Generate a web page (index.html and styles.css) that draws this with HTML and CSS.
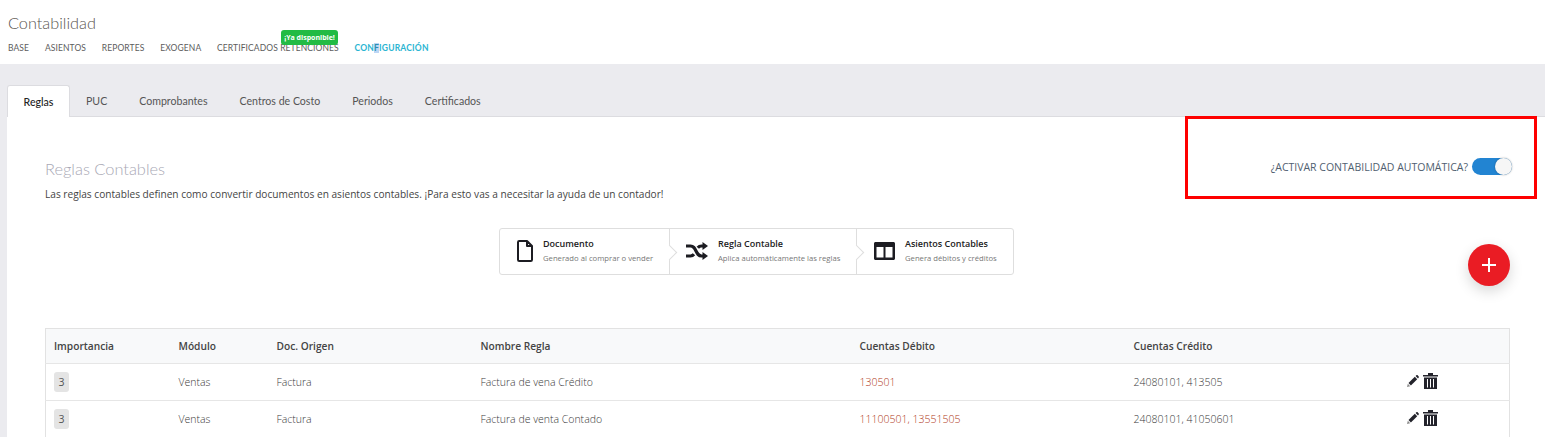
FILE: index.html
```html
<!DOCTYPE html>
<html lang="es">
<head>
<meta charset="utf-8">
<title>Contabilidad</title>
<link rel="stylesheet" href="styles.css">
</head>
<body>
<header class="top">
  <h1 class="app-title">Contabilidad</h1>
  <nav class="main-nav">
    <a>BASE</a>
    <a>ASIENTOS</a>
    <a>REPORTES</a>
    <a>EXOGENA</a>
    <a class="with-badge">CERTIFICADOS RETENCIONES<span class="badge">¡Ya disponible!</span></a>
    <a class="active">CON<span class="sel">F</span>IGURACIÓN</a>
  </nav>
</header>
<main class="band">
  <ul class="tabs">
    <li class="tab current">Reglas</li>
    <li class="tab">PUC</li>
    <li class="tab">Comprobantes</li>
    <li class="tab">Centros de Costo</li>
    <li class="tab">Periodos</li>
    <li class="tab">Certificados</li>
  </ul>
  <section class="panel">
    <div class="intro">
      <div class="intro-text">
        <h2 class="section-title">Reglas Contables</h2>
        <p class="section-sub">Las reglas contables definen como convertir documentos en asientos contables. ¡Para esto vas a necesitar la ayuda de un contador!</p>
      </div>
      <div class="auto-box">
        <span class="auto-label">¿ACTIVAR CONTABILIDAD AUTOMÁTICA?</span>
        <span class="switch"><span class="knob"></span></span>
      </div>
    </div>
    <div class="steps-row">
      <div class="steps">
        <div class="step step-1">
          <svg class="step-icon" width="16" height="22" viewBox="0 0 16 22"><path d="M1 2.200C1 1.500 1.500 1 2.200 1H10L15 6V19.800C15 20.500 14.500 21 13.800 21H2.200C1.500 21 1 20.500 1 19.800Z M10 1V6H15" fill="none" stroke="#1c1c22" stroke-width="2" stroke-linejoin="round"/></svg>
          <div><div class="step-name">Documento</div><div class="step-desc">Generado al comprar o vender</div></div>
        </div>
        <div class="step step-2">
          <svg class="step-icon" width="22" height="18" viewBox="0 0 22 18"><path d="M0 4H4.500C7.500 4 8.500 6 10 9C11.500 12 12.500 14 15.500 14H19M0 14H4.500C6 14 7 13.500 8 12.300M11.800 5.700C12.800 4.500 14 4 15.500 4H19" fill="none" stroke="#1c1c22" stroke-width="3.200"/><path d="M16.500 0L22 4L16.500 8Z M16.500 10L22 14L16.500 18Z" fill="#1c1c22"/></svg>
          <div><div class="step-name">Regla Contable</div><div class="step-desc">Aplica automáticamente las reglas</div></div>
        </div>
        <div class="step step-3">
          <svg class="step-icon" width="21" height="18" viewBox="0 0 21 18"><path d="M1.500 0H19.500C20.300 0 21 .7 21 1.500V16.500C21 17.300 20.300 18 19.500 18H1.500C.7 18 0 17.300 0 16.500V1.500C0 .7.7 0 1.500 0ZM2.500 5V15.500H9.500V5ZM11.500 5V15.500H18.500V5Z" fill="#1c1c22" fill-rule="evenodd"/></svg>
          <div><div class="step-name">Asientos Contables</div><div class="step-desc">Genera débitos y créditos</div></div>
        </div>
      </div>
      <button class="fab" aria-label="Agregar"><svg width="16" height="16" viewBox="0 0 16 16"><path d="M8 1V15M1 8H15" stroke="#fff" stroke-width="2"/></svg></button>
    </div>
    <table class="rules">
      <thead>
        <tr><th class="c-imp">Importancia</th><th class="c-mod">Módulo</th><th class="c-doc">Doc. Origen</th><th class="c-name">Nombre Regla</th><th class="c-deb">Cuentas Débito</th><th class="c-cre">Cuentas Crédito</th><th></th></tr>
      </thead>
      <tbody>
        <tr>
          <td><span class="rank">3</span></td><td>Ventas</td><td>Factura</td><td>Factura de vena Crédito</td><td class="debit">130501</td><td>24080101, 413505</td>
          <td class="actions"><svg class="pencil" width="12" height="12" viewBox="0 0 12 12"><path d="M0 12L.8 8.800L3.200 11.200Z" fill="#8a8a8a"/><path d="M1.500 8.100L7.800 1.800L10.200 4.200L3.900 10.500Z" fill="#23232b"/><path d="M8.600 1L9.400 .3C9.800 0 10.200 0 10.600 .3L11.700 1.400C12 1.800 12 2.200 11.700 2.600L11 3.400Z" fill="#23232b"/></svg><svg class="trash" width="15" height="16" viewBox="0 0 15 16"><path d="M0 2H5V0H10V2H15V3.500H0Z M1 4.500H14V16H1Z" fill="#23232b"/><path d="M4.500 6V14.500M7.500 6V14.500M10.500 6V14.500" stroke="#fff" stroke-width="1"/></svg></td>
        </tr>
        <tr>
          <td><span class="rank">3</span></td><td>Ventas</td><td>Factura</td><td>Factura de venta Contado</td><td class="debit">11100501, 13551505</td><td>24080101, 41050601</td>
          <td class="actions"><svg class="pencil" width="12" height="12" viewBox="0 0 12 12"><path d="M0 12L.8 8.800L3.200 11.200Z" fill="#8a8a8a"/><path d="M1.500 8.100L7.800 1.800L10.200 4.200L3.900 10.500Z" fill="#23232b"/><path d="M8.600 1L9.400 .3C9.800 0 10.200 0 10.600 .3L11.700 1.400C12 1.800 12 2.200 11.700 2.600L11 3.400Z" fill="#23232b"/></svg><svg class="trash" width="15" height="16" viewBox="0 0 15 16"><path d="M0 2H5V0H10V2H15V3.500H0Z M1 4.500H14V16H1Z" fill="#23232b"/><path d="M4.500 6V14.500M7.500 6V14.500M10.500 6V14.500" stroke="#fff" stroke-width="1"/></svg></td>
        </tr>
      </tbody>
    </table>
    <div class="highlight"></div>
  </section>
</main>
</body>
</html>
```
FILE: styles.css
```css
* { box-sizing: border-box; }
html, body { margin: 0; height: 437px; overflow: hidden; background: #fff; }
body { font-family: "Open Sans", sans-serif; color: #333; }
.top { height: 64px; padding: 13px 8px 0; }
.app-title { margin: 0; font: 300 16.300px/20px Lato, sans-serif; color: #5a5550; }
.main-nav { display: flex; gap: 15.800px; margin-top: 8px; font: 400 8.500px/14px Lato, sans-serif; color: #5c5c5c; letter-spacing: .1px; }
.main-nav a { white-space: nowrap; }
.with-badge { position: relative; }
.badge { position: absolute; left: 64px; top: -11px; width: 57px; height: 15px; background: #22bb44; color: #fff; border-radius: 3px; font: 700 7px/15px "Open Sans", sans-serif; text-align: center; letter-spacing: 0; }
.active { color: #2bb5d2; font-weight: 700; letter-spacing: .2px; }
.sel { background: #bcd6f5; color: #2b8fb0; }
.band { background: #ebebef; padding: 21px 0 0 7px; }
.tabs { display: flex; list-style: none; margin: 0; padding: 0; height: 32px; border-bottom: 1px solid #dcdce0; font: 400 10.600px/32px Lato, sans-serif; color: #555; }
.tab { padding: 0 16px; }
.tab.current { width: 63px; height: 32px; background: #fff; border: 1px solid #dcdce0; border-bottom: 0; border-radius: 3px 3px 0 0; color: #222; padding: 0; text-align: center; font-weight: 500; }
.panel { position: relative; background: #fff; height: 320px; padding: 0 35px 0 38px; }
.intro { display: flex; justify-content: space-between; height: 111px; padding-top: 41px; }
.section-title { margin: 0; font: 300 16.400px/22px Lato, sans-serif; color: #a9a9b5; }
.section-sub { margin: 7px 0 0; font: 400 10.140px/14px "Open Sans", sans-serif; color: #444; }
.auto-box { display: flex; align-items: center; gap: 4px; height: 17px; margin: 0 -2px 0 0; }
.auto-label { font: 400 10.500px/16px "Open Sans", sans-serif; color: #506070; }
.switch { display: flex; justify-content: flex-end; width: 40px; height: 17px; border-radius: 9px; background: #2284d2; }
.knob { width: 17px; height: 17px; border-radius: 50%; background: #f6f6f6; box-shadow: 0 0 2px rgba(0,0,0,.35); }
.steps-row { position: relative; height: 100px; display: flex; justify-content: flex-start; padding-left: 454px; }
.steps { display: flex; height: 47px; width: 515px; border: 1px solid #dedede; border-radius: 3px; }
.step { display: flex; align-items: center; position: relative; padding-bottom: 1px; }
.step + .step { border-left: 1px solid #dedede; }
.step + .step::before { content: ""; position: absolute; left: -6px; top: 18px; width: 10px; height: 10px; background: #fff; border-top: 1px solid #dedede; border-right: 1px solid #dedede; transform: rotate(45deg); }
.step-1 { width: 169px; padding-left: 17px; gap: 10px; }
.step-2 { width: 187px; padding-left: 16px; gap: 10px; }
.step-3 { flex: 1; padding-left: 17px; gap: 10px; }
.step-icon { flex: none; position: relative; }
.step-name { font: 600 9px/13px "Open Sans", sans-serif; color: #222; }
.step-desc { font: 400 7.700px/13px "Open Sans", sans-serif; color: #777; margin-top: 2px; white-space: nowrap; }
.fab { position: absolute; top: 16px; right: 0; width: 42px; height: 42px; padding: 0; border: 0; border-radius: 50%; background: #ea1c24; box-shadow: 0 5px 14px rgba(0,0,0,.16); display: flex; align-items: center; justify-content: center; }
.rules { width: 1465px; border-collapse: collapse; table-layout: fixed; border: 1px solid #e2e2e2; font: 300 10.500px/14px "Open Sans", sans-serif; color: #3a3a3a; }
.rules th { height: 35px; background: #f8f9fa; text-align: left; font: 600 10.200px/14px "Open Sans", sans-serif; color: #444; padding: 0 0 0 8px; }
.rules td { height: 37px; padding: 0 0 0 8px; border-top: 1px solid #e6e6e6; }
.c-imp { width: 125px; }
.c-mod { width: 98px; }
.c-doc { width: 204px; }
.c-name { width: 379px; }
.c-deb { width: 274px; }
.c-cre { width: 273px; }
.rank { display: inline-block; width: 15px; height: 20px; font-weight: 400; line-height: 20px; text-align: center; background: #e4e4e4; border-radius: 3px; color: #555; }
.debit { color: #b03a22; }
.actions { white-space: nowrap; }
.actions svg { vertical-align: middle; margin-bottom: 2px; }
.pencil { margin-left: 0; margin-right: 4px; }
.highlight { position: absolute; left: 1178px; top: -1px; width: 352px; height: 83px; border: 3px solid #fe0000; pointer-events: none; }
```
